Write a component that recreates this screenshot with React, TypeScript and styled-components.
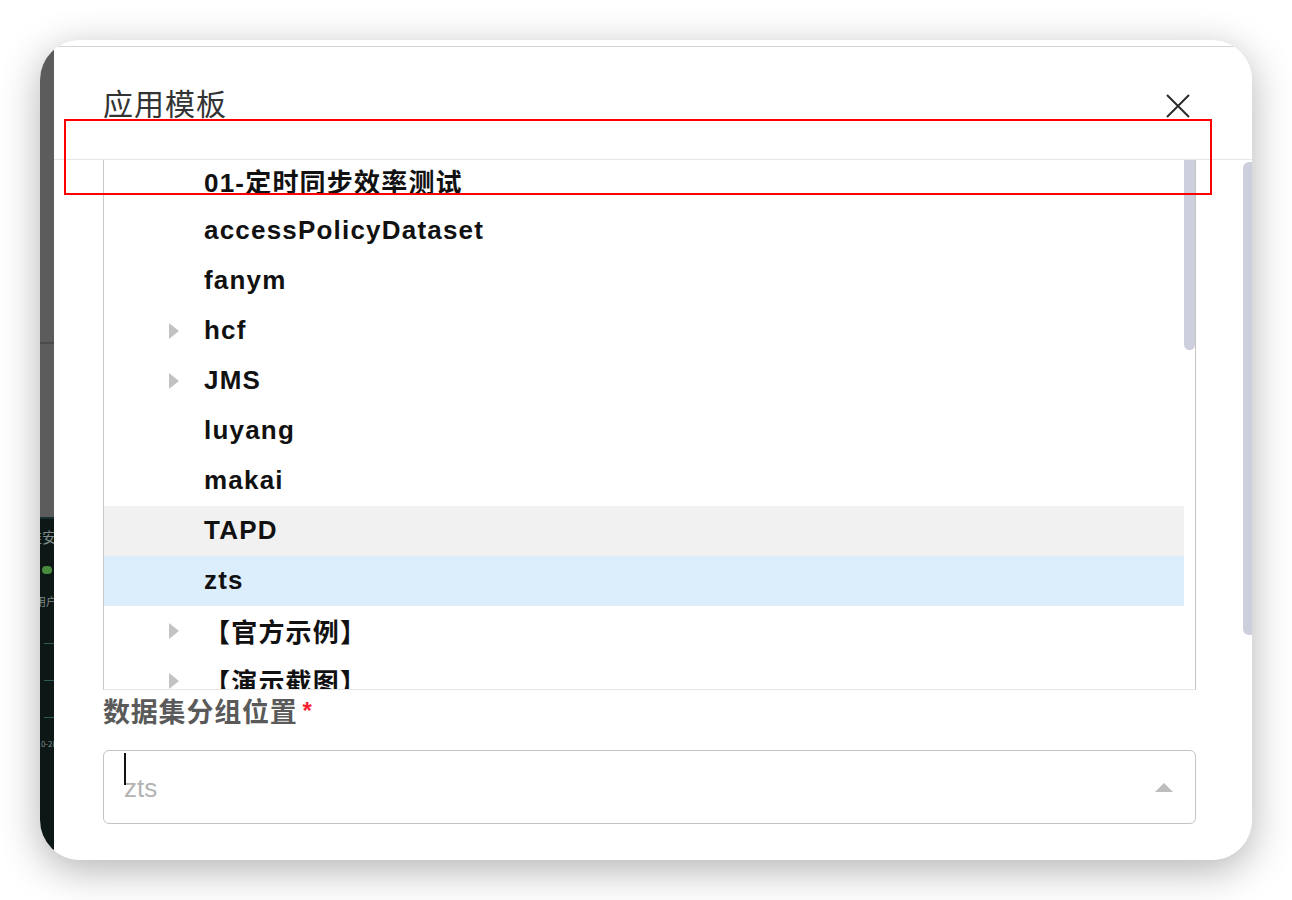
import React from 'react'
import styled, { createGlobalStyle } from 'styled-components'

const GlobalStyle = createGlobalStyle`
  html, body {
    margin: 0;
    padding: 0;
    background: #ffffff;
  }
  * {
    box-sizing: border-box;
  }
`

type Node = {
  name: string
  expandable?: boolean
  state?: 'hover' | 'selected'
}

const nodes: Node[] = [
  { name: '01-定时同步效率测试' },
  { name: 'accessPolicyDataset' },
  { name: 'fanym' },
  { name: 'hcf', expandable: true },
  { name: 'JMS', expandable: true },
  { name: 'luyang' },
  { name: 'makai' },
  { name: 'TAPD', state: 'hover' },
  { name: 'zts', state: 'selected' },
  { name: '【官方示例】', expandable: true },
  { name: '【演示截图】', expandable: true },
]

const App = () => {
  return (
    <Page>
      <GlobalStyle />
      <Window>
        <Backdrop>
          <BackdropTop>
            <BackdropRule />
          </BackdropTop>
          <BackdropDark>
            <FaintText size={15}>准安</FaintText>
            <GreenBlob />
            <FaintText size={11}>用户</FaintText>
            <ChartLine />
            <ChartLine />
            <ChartLine />
            <FaintText size={8}>10-28</FaintText>
          </BackdropDark>
        </Backdrop>

        <Modal>
          <Header>
            <Title>应用模板</Title>
            <CloseButton aria-label="close">
              <svg width="26" height="26" viewBox="0 0 26 26">
                <path d="M2 2 L24 24 M24 2 L2 24" stroke="#2b2b2b" strokeWidth="2" fill="none" />
              </svg>
            </CloseButton>
          </Header>

          <Body>
            <Content>
              <TreeBox>
                <TreeRows>
                  <TreeInner>
                    {nodes.map((n) => (
                      <Row key={n.name} state={n.state}>
                        {n.expandable ? <Caret /> : <CaretSpace />}
                        <RowText>{n.name}</RowText>
                      </Row>
                    ))}
                  </TreeInner>
                </TreeRows>
                <InnerTrack>
                  <InnerThumb />
                </InnerTrack>
              </TreeBox>

              <LabelRow>
                <Label>数据集分组位置</Label>
                <Required>*</Required>
              </LabelRow>

              <Select>
                <Caretline />
                <Placeholder>zts</Placeholder>
                <UpArrow />
              </Select>
            </Content>

            <OuterTrack>
              <OuterThumb />
            </OuterTrack>
          </Body>
        </Modal>
      </Window>

      <Annotation />
    </Page>
  )
}

export default App

const Page = styled.div`
  position: relative;
  width: 1292px;
  height: 900px;
  padding: 40px;
  background: #ffffff;
`

const Window = styled.div`
  width: 1212px;
  height: 820px;
  display: flex;
  border-radius: 40px;
  overflow: hidden;
  background: #ffffff;
  box-shadow: 0 10px 40px rgba(0, 0, 0, 0.3);
`

const Backdrop = styled.div`
  width: 14px;
  flex-shrink: 0;
  display: flex;
  flex-direction: column;
  overflow: hidden;
`

const BackdropTop = styled.div`
  height: 477px;
  padding-top: 302px;
  background: #5b5c5b;
`

const BackdropRule = styled.div`
  height: 2px;
  background: #4a4b4a;
`

const BackdropDark = styled.div`
  flex: 1;
  background: #0c1716;
  display: flex;
  flex-direction: column;
  align-items: flex-end;
  padding-top: 10px;
  gap: 22px;
  border-top: 2px solid #15302c;
`

const FaintText = styled.div<{ size: number }>`
  font-family: 'Noto Sans CJK SC', sans-serif;
  font-size: ${(p) => p.size}px;
  color: #7d8a88;
  white-space: nowrap;
  line-height: 1;
  margin-right: -3px;
`

const GreenBlob = styled.div`
  width: 10px;
  height: 8px;
  border-radius: 4px;
  background: #4a8a3d;
  margin-right: 2px;
`

const ChartLine = styled.div`
  width: 10px;
  height: 1px;
  background: #2d5a58;
  margin-top: 14px;
`

const Modal = styled.div`
  flex: 1;
  display: flex;
  flex-direction: column;
  margin-top: 6px;
  border-top: 1px solid #d4d4d4;
  background: #ffffff;
  min-width: 0;
`

const Header = styled.div`
  height: 113px;
  flex-shrink: 0;
  display: flex;
  align-items: center;
  justify-content: space-between;
  padding: 0 61px 0 49px;
  border-bottom: 1px solid #e6e6ec;
`

const Title = styled.div`
  font-family: 'Noto Sans CJK SC', sans-serif;
  font-size: 30px;
  color: #333333;
  letter-spacing: 1px;
  margin-top: -2px;
`

const CloseButton = styled.div`
  width: 26px;
  height: 26px;
  display: flex;
  margin-top: 6px;
`

const Body = styled.div`
  flex: 1;
  display: flex;
  justify-content: space-between;
  min-height: 0;
`

const Content = styled.div`
  width: 1142px;
  padding-left: 49px;
  display: flex;
  flex-direction: column;
`

const TreeBox = styled.div`
  height: 530px;
  display: flex;
  border-left: 1px solid #c8c8c8;
  border-right: 1px solid #c4c4c4;
  border-bottom: 1px solid #e6e6e6;
`

const TreeRows = styled.div`
  flex: 1;
  overflow: hidden;
`

const TreeInner = styled.div`
  margin-top: -4px;
`

const Row = styled.div<{ state?: 'hover' | 'selected' }>`
  height: 50px;
  display: flex;
  align-items: center;
  padding-left: 65px;
  gap: 25px;
  background: ${(p) =>
    p.state === 'hover' ? '#f1f1f1' : p.state === 'selected' ? '#dcedfb' : 'transparent'};
`

const Caret = styled.span`
  width: 0;
  height: 0;
  border-left: 10px solid #c2c2c2;
  border-top: 8.5px solid transparent;
  border-bottom: 8.5px solid transparent;
`

const CaretSpace = styled.span`
  width: 10px;
`

const RowText = styled.span`
  font-family: 'Liberation Sans', 'Noto Sans CJK SC', sans-serif;
  font-weight: 700;
  font-size: 26px;
  letter-spacing: 1.2px;
  color: #111111;
  white-space: nowrap;
  margin-top: -1px;
`

const InnerTrack = styled.div`
  width: 11px;
  flex-shrink: 0;
`

const InnerThumb = styled.div`
  height: 190px;
  background: #cdd0dc;
  border-radius: 0 0 6px 6px;
`

const LabelRow = styled.div`
  display: flex;
  align-items: flex-start;
  height: 40px;
  padding-top: 3px;
  margin-bottom: 20px;
`

const Label = styled.span`
  font-family: 'Noto Sans CJK SC', sans-serif;
  font-size: 27px;
  font-weight: 700;
  letter-spacing: 0.8px;
  color: #5a5a5a;
  line-height: 36px;
`

const Required = styled.span`
  color: #f5222d;
  font-family: 'Liberation Sans', sans-serif;
  font-size: 24px;
  font-weight: 700;
  line-height: 24px;
  margin-left: 5px;
  margin-top: 6px;
`

const Select = styled.div`
  position: relative;
  height: 74px;
  display: flex;
  align-items: center;
  justify-content: space-between;
  padding: 0 22px 0 20px;
  border: 1px solid #c4c4c4;
  border-radius: 6px;
`

const Caretline = styled.span`
  position: absolute;
  left: 20px;
  top: 2px;
  width: 2px;
  height: 32px;
  background: #111111;
`

const Placeholder = styled.span`
  font-family: 'Liberation Sans', sans-serif;
  font-size: 26px;
  color: #b3b3b3;
  margin-top: 2px;
`

const UpArrow = styled.span`
  width: 0;
  height: 0;
  margin-top: 0;
  border-bottom: 9px solid #bdbdbd;
  border-left: 9px solid transparent;
  border-right: 9px solid transparent;
`

const OuterTrack = styled.div`
  width: 9px;
  padding-top: 2px;
`

const OuterThumb = styled.div`
  height: 473px;
  background: #cdd0dc;
  border-radius: 6px 0 0 6px;
`

const Annotation = styled.div`
  position: absolute;
  left: 64px;
  top: 119px;
  width: 1148px;
  height: 76px;
  border: 2px solid #ff0000;
  pointer-events: none;
`
